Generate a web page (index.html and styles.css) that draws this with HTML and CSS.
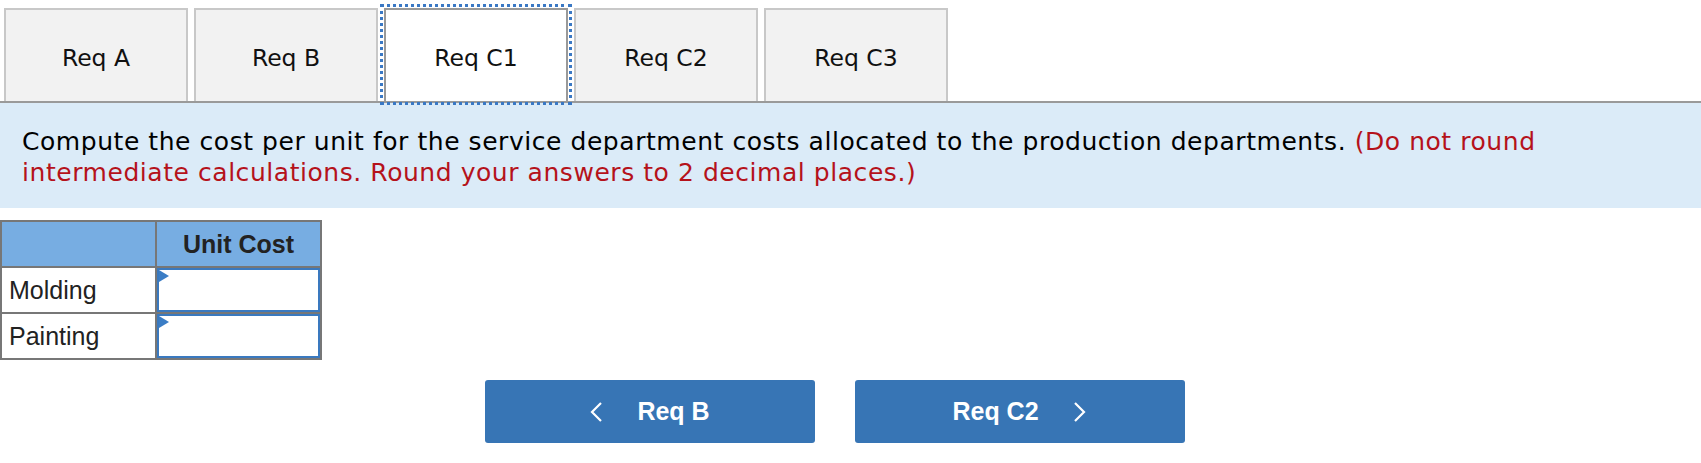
FILE: index.html
```html
<!DOCTYPE html>
<html lang="en">

<head>
  <meta charset="UTF-8">
  <meta name="viewport" content="width=device-width, initial-scale=1.0">
  <title>Req C1</title>
  <link rel="stylesheet" href="styles.css">
</head>

<body>
  <div class="tabs">
    <button class="tab">Req A</button>
    <button class="tab">Req B</button>
    <button class="tab active">Req C1</button>
    <button class="tab">Req C2</button>
    <button class="tab">Req C3</button>
  </div>

  <div class="question">
    Compute the cost per unit for the service department costs allocated to the production departments.
    <span class="hint">(Do not round intermediate calculations. Round your answers to 2 decimal places.)</span>
  </div>

  <table class="answer">
    <thead>
      <tr>
        <th class="label"></th>
        <th class="value">Unit Cost</th>
      </tr>
    </thead>
    <tbody>
      <tr>
        <td class="label">Molding</td>
        <td class="value"><div class="entry"><span class="marker"></span><input type="text"></div></td>
      </tr>
      <tr>
        <td class="label">Painting</td>
        <td class="value"><div class="entry"><span class="marker"></span><input type="text"></div></td>
      </tr>
    </tbody>
  </table>

  <div class="nav">
    <button class="nav-btn">
      <svg width="14" height="22" viewBox="0 0 14 22"><polyline points="12,2 3,11 12,20" fill="none" stroke="#fff" stroke-width="2.2"/></svg>
      <span>Req B</span>
    </button>
    <button class="nav-btn">
      <span>Req C2</span>
      <svg width="14" height="22" viewBox="0 0 14 22"><polyline points="2,2 11,11 2,20" fill="none" stroke="#fff" stroke-width="2.2"/></svg>
    </button>
  </div>
</body>

</html>
```

FILE: styles.css
```css
body {
  margin: 0;
  font-family: "DejaVu Sans", Verdana, sans-serif;
  background-color: #fff;
  color: #000;
}

.tabs {
  display: flex;
  gap: 6px;
  padding: 8px 0 0 4px;
  border-bottom: 2px solid #9a9a9a;
}

.tab {
  box-sizing: border-box;
  width: 184px;
  height: 93px;
  padding: 4px 0 0;
  background-color: #f2f2f2;
  border: 2px solid #c8c8c8;
  border-bottom: none;
  font-family: "DejaVu Sans", Verdana, sans-serif;
  font-size: 23.5px;
  color: #111;
  cursor: pointer;
}

.tab.active {
  background-color: #fff;
  border-color: #999;
  outline: 3px dotted #3a78c4;
  outline-offset: 1px;
}

.question {
  background-color: #dbebf8;
  padding: 23px 100px 20px 22px;
  font-size: 25px;
  line-height: 31px;
  letter-spacing: 0.55px;
}

.hint {
  color: #b5121b;
}

.answer {
  margin-top: 12px;
  border-collapse: collapse;
  font-family: "Liberation Sans", Arial, sans-serif;
  font-size: 25px;
  color: #222;
}

.answer th,
.answer td {
  border: 2px solid #777;
  padding: 0;
  height: 44px;
}

.answer thead th {
  background-color: #77ade2;
  font-weight: bold;
}

.answer .label {
  width: 146px;
  padding-left: 7px;
  text-align: left;
}

.answer .value {
  width: 163px;
  text-align: center;
}

.entry {
  position: relative;
  height: 44px;
}

.entry input {
  box-sizing: border-box;
  width: 100%;
  height: 100%;
  margin: 0;
  border: 2px solid #3a79bf;
  font-size: 22px;
  outline: none;
}

.marker {
  position: absolute;
  left: 2px;
  top: 2px;
  width: 0;
  height: 0;
  border-top: 6px solid transparent;
  border-bottom: 6px solid transparent;
  border-left: 10px solid #3b7dc5;
}

.nav {
  display: flex;
  justify-content: center;
  gap: 40px;
  padding-right: 32px;
  margin-top: 20px;
}

.nav-btn {
  display: flex;
  align-items: center;
  justify-content: center;
  gap: 34px;
  width: 330px;
  height: 63px;
  background-color: #3775b5;
  border: none;
  border-radius: 3px;
  color: #fff;
  font-family: "Liberation Sans", Arial, sans-serif;
  font-weight: bold;
  font-size: 25px;
  cursor: pointer;
}
```
